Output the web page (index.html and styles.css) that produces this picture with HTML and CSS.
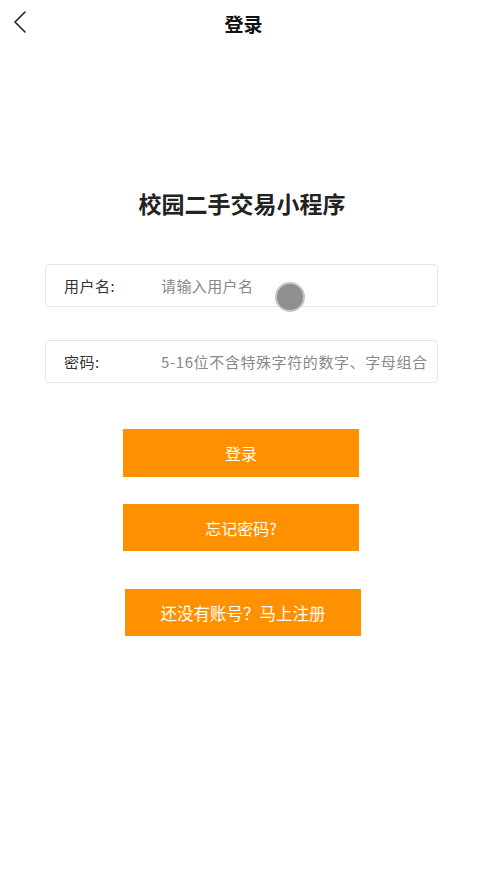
FILE: index.html
```html
<!DOCTYPE html>
<html lang="zh-CN">
<head>
<meta charset="utf-8">
<title>登录</title>
<link rel="stylesheet" href="styles.css">
</head>
<body>
<div class="page">
  <header class="nav">
    <span class="back">
      <svg width="14" height="22" viewBox="0 0 14 22"><path d="M12 1 L2 11 L12 21" fill="none" stroke="#222" stroke-width="1.6" stroke-linecap="round" stroke-linejoin="round"/></svg>
    </span>
    <h1 class="nav-title">登录</h1>
  </header>

  <h2 class="app-title">校园二手交易小程序</h2>

  <div class="field field-user">
    <span class="label">用户名:</span>
    <span class="placeholder">请输入用户名</span>
    <span class="touch"></span>
  </div>
  <div class="field field-pass">
    <span class="label">密码:</span>
    <span class="placeholder placeholder-tight">5-16位不含特殊字符的数字、字母组合</span>
  </div>

  <div class="btn btn-login">登录</div>
  <div class="btn btn-forgot">忘记密码?</div>
  <div class="btn btn-register">还没有账号？马上注册</div>
</div>
</body>
</html>
```

FILE: styles.css
```css
* { box-sizing: border-box; margin: 0; padding: 0; }
html, body { background: #fff; }
body {
  font-family: "Noto Sans CJK SC", "Noto Sans", sans-serif;
  color: #333;
}
.page { width: 489px; min-height: 870px; }
.nav {
  position: relative;
  height: 46px;
  display: flex;
  align-items: center;
  justify-content: center;
}
.back {
  position: absolute;
  left: 13px;
  top: 11px;
  width: 14px;
  height: 22px;
  display: flex;
}
.nav-title {
  font-size: 19px;
  font-weight: 700;
  color: #111;
  line-height: 1;
  margin-left: -2px;
}
.app-title {
  margin-top: 142px;
  padding-right: 5px;
  text-align: center;
  font-size: 23px;
  font-weight: 700;
  color: #222;
  line-height: 30px;
}
.field {
  position: relative;
  margin-left: 45px;
  width: 393px;
  height: 43px;
  border: 1px solid #e6e6e6;
  border-radius: 4px;
  display: flex;
  align-items: center;
  padding-left: 18px;
  font-size: 15px;
}
.field-user { margin-top: 46px; }
.field-pass { margin-top: 33px; }
.label { width: 97px; color: #333; flex-shrink: 0; letter-spacing: 0.5px; }
.placeholder { color: #888; white-space: nowrap; letter-spacing: 0.4px; }
.placeholder-tight { letter-spacing: 0.6px; }
.touch {
  position: absolute;
  left: 231px;
  top: 19px;
  width: 26px;
  height: 26px;
  border-radius: 50%;
  background: #8f8f8f;
  box-shadow: 0 0 0 2px #c4c4c4;
}
.btn {
  width: 236px;
  height: 48px;
  background: #ff9100;
  color: #fff;
  font-size: 16px;
  display: flex;
  align-items: center;
  justify-content: center;
}
.btn-login { margin: 46px 0 0 123px; }
.btn-forgot { margin: 27px 0 0 123px; height: 47px; }
.btn-register { margin: 38px 0 0 125px; height: 47px; font-size: 16.5px; }
```
